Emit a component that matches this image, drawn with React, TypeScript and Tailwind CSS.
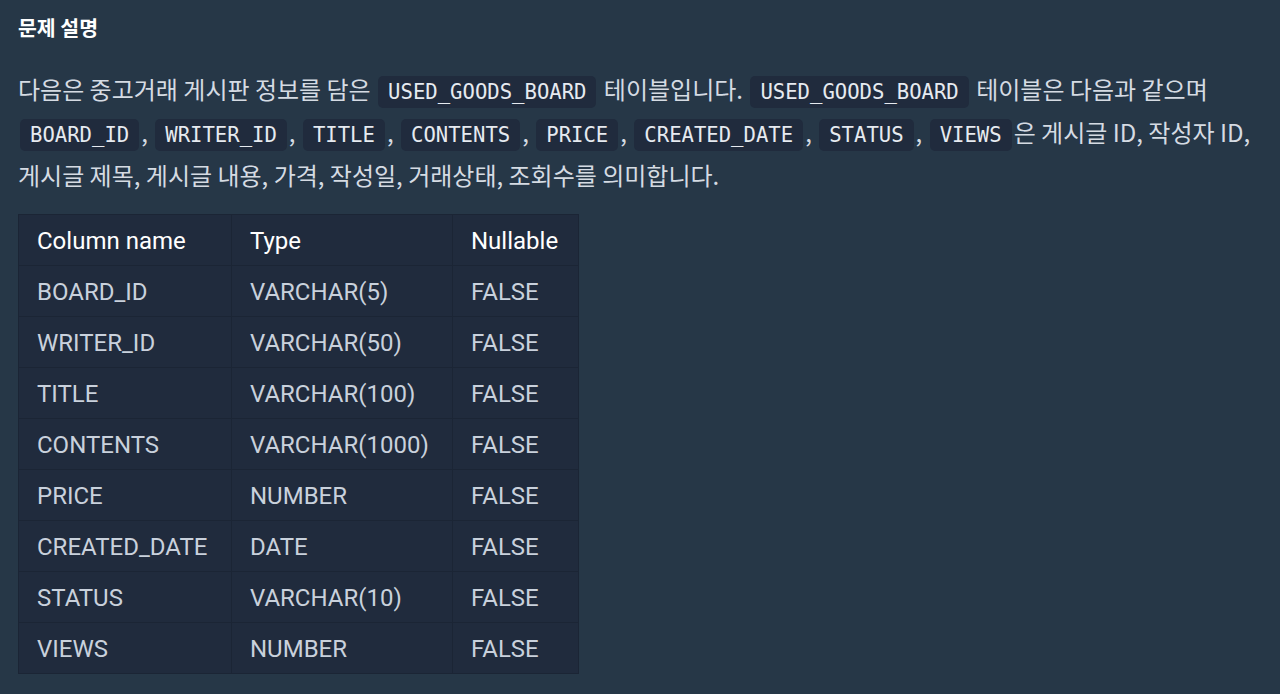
import React from 'react';

const Code: React.FC<{ children: React.ReactNode }> = ({ children }) => (
  <code className="inline-block h-[32px] leading-[32px] px-[10px] mx-[2px] rounded-[5px] bg-[#202b3d] text-[#e6eaf0] text-[20.6px] font-['DejaVu_Sans_Mono','Liberation_Mono',monospace] align-middle">
    {children}
  </code>
);

const rows: [string, string, string][] = [
  ['BOARD_ID', 'VARCHAR(5)', 'FALSE'],
  ['WRITER_ID', 'VARCHAR(50)', 'FALSE'],
  ['TITLE', 'VARCHAR(100)', 'FALSE'],
  ['CONTENTS', 'VARCHAR(1000)', 'FALSE'],
  ['PRICE', 'NUMBER', 'FALSE'],
  ['CREATED_DATE', 'DATE', 'FALSE'],
  ['STATUS', 'VARCHAR(10)', 'FALSE'],
  ['VIEWS', 'NUMBER', 'FALSE'],
];

const App: React.FC = () => {
  return (
    <div className="min-h-[694px] bg-[#263747] px-[18px] pt-[14px] font-['Noto_Sans_CJK_KR','Noto_Sans',sans-serif]">
      <h5 className="text-[20.5px] leading-[26px] font-bold text-white">문제 설명</h5>

      <p className="mt-[27px] text-[24px] leading-[43px] text-[#d5dbe3]">
        다음은 중고거래 게시판 정보를 담은 <Code>USED_GOODS_BOARD</Code> 테이블입니다. <Code>USED_GOODS_BOARD</Code> 테이블은 다음과 같으며{' '}
        <Code>BOARD_ID</Code>, <Code>WRITER_ID</Code>, <Code>TITLE</Code>, <Code>CONTENTS</Code>, <Code>PRICE</Code>,{' '}
        <Code>CREATED_DATE</Code>, <Code>STATUS</Code>, <Code>VIEWS</Code>은 게시글 ID, 작성자 ID, 게시글 제목, 게시글 내용, 가격,
        작성일, 거래상태, 조회수를 의미합니다.
      </p>

      <table className="mt-[18px] border-collapse bg-[#202b3d] text-[24px] font-['Roboto','Liberation_Sans',sans-serif]">
        <thead>
          <tr className="h-[51px]">
            <th className="w-[213px] border border-[#1b2535] px-[18px] pt-[2px] text-left font-normal text-white">Column name</th>
            <th className="w-[221px] border border-[#1b2535] px-[18px] pt-[2px] text-left font-normal text-white">Type</th>
            <th className="w-[126px] border border-[#1b2535] px-[18px] pt-[2px] text-left font-normal text-white">Nullable</th>
          </tr>
        </thead>
        <tbody>
          {rows.map(([name, type, nullable]) => (
            <tr key={name} className="h-[51px]">
              <td className="border border-[#1b2535] px-[18px] pt-[1px] text-[#c9d1dc]">{name}</td>
              <td className="border border-[#1b2535] px-[18px] pt-[1px] text-[#c9d1dc]">{type}</td>
              <td className="border border-[#1b2535] px-[18px] pt-[1px] text-[#c9d1dc]">{nullable}</td>
            </tr>
          ))}
        </tbody>
      </table>
    </div>
  );
};

export default App;
